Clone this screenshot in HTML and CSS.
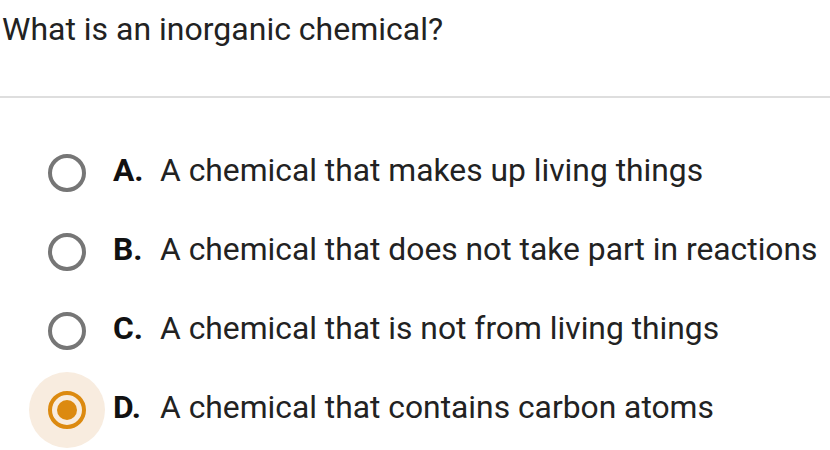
FILE: index.html
```html
<!DOCTYPE html>
<html>
<head>
<meta charset="utf-8">
<link rel="stylesheet" href="styles.css">
</head>
<body>
<div class="quiz">
  <h1 class="question">What is an inorganic chemical?</h1>
  <div class="divider"></div>
  <ul class="options">
    <li class="option"><span class="radio-wrap"><span class="radio"></span></span><span class="letter">A.</span><span class="text">A chemical that makes up living things</span></li>
    <li class="option"><span class="radio-wrap"><span class="radio"></span></span><span class="letter">B.</span><span class="text">A chemical that does not take part in reactions</span></li>
    <li class="option"><span class="radio-wrap"><span class="radio"></span></span><span class="letter">C.</span><span class="text">A chemical that is not from living things</span></li>
    <li class="option selected"><span class="radio-wrap"><span class="radio"></span></span><span class="letter">D.</span><span class="text">A chemical that contains carbon atoms</span></li>
  </ul>
</div>
</body>
</html>
```
FILE: styles.css
```css
html, body {
  margin: 0;
  padding: 0;
  background: #ffffff;
  font-family: Roboto, "Noto Sans", sans-serif;
}
.quiz {
  width: 830px;
  height: 450px;
  overflow: hidden;
}
.question {
  margin: 0;
  padding: 10px 0 0 2px;
  height: 96px;
  box-sizing: border-box;
  font-size: 32px;
  line-height: 38px;
  font-weight: 400;
  color: #222222;
}
.divider {
  height: 2px;
  background: #dedede;
}
.options {
  list-style: none;
  margin: 0;
  padding: 37px 0 0 29px;
  display: flex;
  flex-direction: column;
  gap: 3px;
}
.option {
  display: flex;
  align-items: center;
  height: 76px;
  font-size: 31.8px;
  color: #222222;
}
.radio-wrap {
  width: 76px;
  height: 76px;
  border-radius: 50%;
  display: flex;
  align-items: center;
  justify-content: center;
  flex: none;
}
.radio {
  width: 38px;
  height: 38px;
  box-sizing: border-box;
  border: 4px solid #767676;
  border-radius: 50%;
  display: flex;
  align-items: center;
  justify-content: center;
}
.selected .radio-wrap {
  background: #f8ecdf;
}
.selected .radio {
  border-color: #dc8a10;
}
.selected .radio::after {
  content: "";
  width: 20px;
  height: 20px;
  border-radius: 50%;
  background: #dc8a10;
}
.letter {
  font-weight: 700;
  color: #111111;
  margin-left: 8px;
  width: 47px;
  flex: none;
  margin-bottom: 6px;
}
.text {
  white-space: nowrap;
  margin-bottom: 6px;
}
```
